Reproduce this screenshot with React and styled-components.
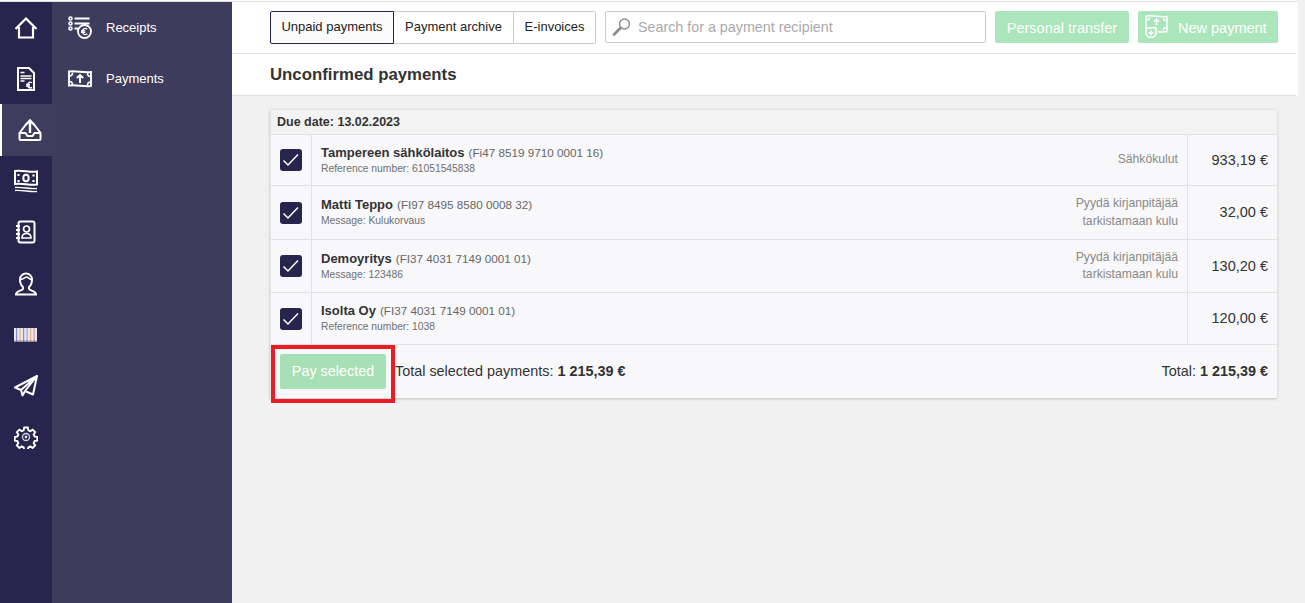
import React from 'react';
import styled, { createGlobalStyle } from 'styled-components';

const Global = createGlobalStyle`
  html, body {
    margin: 0;
    padding: 0;
    height: 100%;
    background: #f1f1f1;
    font-family: "Liberation Sans", Arial, sans-serif;
    color: #333;
  }
  #root {
    height: 100%;
  }
  * {
    box-sizing: border-box;
  }
`;

const HomeIcon = () => (
  <svg width="24" height="24" viewBox="0 0 24 24" fill="none" stroke="#fff" strokeWidth="2.2">
    <path d="M1.5 13 12 2.500 22.500 13M5 11v10.500h14V11" />
  </svg>
);

const InvoiceIcon = () => (
  <svg width="24" height="26" viewBox="0 0 24 26" fill="none" stroke="#fff" strokeWidth="2">
    <path d="M4 2h11l5 5v17H4z" />
    <path d="M6.500 6.500h4M6.500 10h11M6.500 12.500h11M6.500 15h4" strokeWidth="1.300" />
    <path d="M18 16.800a2.800 2.800 0 1 0 0 4.600M12 18.400h4M12 20h4" strokeWidth="1.300" />
  </svg>
);

const OutboxIcon = () => (
  <svg width="24" height="24" viewBox="0 0 24 24" fill="none" stroke="#fff" strokeWidth="2">
    <path d="M7.500 7 1.500 15v6a1 1 0 0 0 1 1h19a1 1 0 0 0 1-1v-6l-6-8" />
    <path d="M1.500 15h6l2 3h5l2-3h6" />
    <path d="M12 15V2.500M7.500 7 12 2.500 16.500 7" strokeWidth="2.400" />
  </svg>
);

const MoneyIcon = () => (
  <svg width="24" height="24" viewBox="0 0 24 24" fill="none" stroke="#fff" strokeWidth="2">
    <path d="M1 2c7.500-1.500 14.500 2 22 .5v13c-7.500 1.500-14.500-2-22-.5z" />
    <ellipse cx="12" cy="9" rx="2.700" ry="3.300" />
    <path d="M4.500 5v2M4.500 11v2M19.500 5.500v2M19.500 11v2" strokeWidth="2.200" />
    <path d="M1 18.500c7.500-.5 15 1.500 22 1M1 21.500c7.500-.5 15 1.500 22 1" strokeWidth="1.300" />
  </svg>
);

const ContactsIcon = () => (
  <svg width="20" height="24" viewBox="0 0 20 24" fill="none" stroke="#fff" strokeWidth="2">
    <rect x="2.500" y="1.500" width="16" height="21" rx="2" />
    <path d="M0 6h4M0 10h4M0 14h4M0 18h4" strokeWidth="1.800" />
    <circle cx="10.500" cy="9" r="3" strokeWidth="1.700" />
    <path d="M6 18c0-3 1.800-4.500 4.500-4.500S15 15 15 18z" strokeWidth="1.700" />
  </svg>
);

const PersonIcon = () => (
  <svg width="22" height="24" viewBox="0 0 22 24" fill="none" stroke="#fff" strokeWidth="2">
    <path d="M5 7.500a6 6 0 0 1 12 0c0 3-1.200 6-3 7.500v2c0 1.500 7 1.500 7 5.500H1c0-4 7-4 7-5.500v-2c-1.800-1.500-3-4.500-3-7.500z" />
    <path d="M5.200 7.500c3 .5 4.800-2.500 6.300-2.500 1.500 0 3 2.500 5.300 2.500" strokeWidth="1.500" />
  </svg>
);

const BarcodeIcon = () => (
  <svg width="23" height="14" viewBox="0 0 23 14">
    <rect width="23" height="14" fill="#e8e6f2" />
    {[2, 5.500, 9, 12.500, 16, 19.500].map((x, i) => (
      <rect
        key={x}
        x={x}
        width="1.200"
        height="14"
        fill={['#8d89c9', '#e3b779', '#8d89c9', '#b49be0', '#e3b779', '#d99a9a'][i]}
      />
    ))}
    <rect y="12.500" width="23" height="1.500" fill="#27244e" opacity="0.4" />
  </svg>
);

const PlaneIcon = () => (
  <svg width="24" height="22" viewBox="0 0 24 22" fill="none" stroke="#fff" strokeWidth="2" strokeLinejoin="round">
    <path d="M23 1 1 12.500l6 2.500L23 1zM23 1l-4 18.500-8-3.500M7 15l1.500 5.500 2.500-4.500L23 1" />
  </svg>
);

const GearIcon = () => (
  <svg width="24" height="24" viewBox="0 0 24 24" fill="none" stroke="#fff" strokeWidth="2.100">
    <path d="M10 1.500h4l.6 3 2.200 1 2.600-1.700 2.800 2.800-1.700 2.600 1 2.200 3 .6v4l-3 .6-1 2.200 1.700 2.600-2.800 2.800-2.600-1.700-2.200 1-.6 3h-4l-.6-3-2.200-1-2.600 1.700-2.800-2.800 1.700-2.600-1-2.200-3-.6v-4l3-.6 1-2.200L1.800 6.600l2.800-2.800 2.600 1.700 2.200-1z" transform="translate(1.200 1.200) scale(.9)" />
    <circle cx="12" cy="12" r="3.500" strokeWidth="1.300" stroke="#d8d6e8" />
    <circle cx="12" cy="12" r="1.400" fill="#d8d6e8" stroke="none" />
  </svg>
);

const ReceiptsIcon = () => (
  <svg width="24" height="23" viewBox="0 0 24 23" fill="none" stroke="#fff" strokeWidth="1.600">
    <circle cx="2.500" cy="2.500" r="1.500" />
    <circle cx="2.500" cy="7.500" r="1.500" />
    <circle cx="2.500" cy="12.500" r="1.500" />
    <path d="M6.500 2.500h15M6.500 7.500h15M6.500 12.500h4" strokeWidth="2" />
    <circle cx="16.500" cy="15.500" r="6.500" strokeWidth="1.800" />
    <path d="M19.300 13.200a3 3 0 1 0 0 4.600M13 14.800h4.300M13 16.400h4.300" strokeWidth="1.300" />
  </svg>
);

const PaymentsIcon = () => (
  <svg width="24" height="18" viewBox="0 0 24 18" fill="none" stroke="#fff" strokeWidth="1.900">
    <path d="M1 1.500c7-1 15 1.500 22 .5v14c-7 1-15-1.500-22-.5z" />
    <path d="M12 13V5M8.800 8 12 5l3.200 3" strokeWidth="2" />
    <path d="M1.500 6c2 0 3-1.500 3-3.500M22.500 6.500c-2 0-3-1.500-3-3.500M1.500 11.500c2 0 3 1.500 3 3.500M22.500 12c-2 0-3 1.500-3 3.500" strokeWidth="1.600" />
  </svg>
);

const SearchIcon = () => (
  <svg width="20" height="20" viewBox="0 0 20 20" fill="none" stroke="#8b8b8b">
    <circle cx="12.500" cy="7" r="5" strokeWidth="1.400" />
    <path d="M8.500 11 2 17.500" strokeWidth="2.600" strokeLinecap="round" />
  </svg>
);

const NewPaymentIcon = () => (
  <svg width="23" height="23" viewBox="0 0 23 23" fill="none" stroke="#fff" strokeWidth="1.500">
    <path d="M1 1c7-1 14 1.500 21 .5v15c-3 .5-6 .5-9 .2" />
    <path d="M1 1v12" />
    <path d="M11.500 10V4M9 6.500 11.500 4 14 6.500M2 5c1.500 0 2.500-1 2.500-2.500M21 5.500c-1.500 0-2.500-1-2.500-2.500M21 12.500c-1.500 0-2.500 1-2.500 2.500" />
    <path d="M1 13h5c2 0 4-1 5 0v5a5 4.500 0 0 1-10 0z" strokeWidth="1.600" />
    <path d="M6 15.500v5M3.500 18h5" strokeWidth="1.800" />
  </svg>
);

const CheckIcon = () => (
  <svg width="22" height="22" viewBox="0 0 22 22" fill="none" stroke="#fff" strokeWidth="1.500">
    <path d="m3.500 11.500 4.500 4.500L18 5.500" />
  </svg>
);

const railItems = [
  { id: 'home', icon: <HomeIcon /> },
  { id: 'invoice', icon: <InvoiceIcon /> },
  { id: 'outbox', icon: <OutboxIcon />, active: true },
  { id: 'money', icon: <MoneyIcon /> },
  { id: 'contacts', icon: <ContactsIcon /> },
  { id: 'person', icon: <PersonIcon /> },
  { id: 'barcode', icon: <BarcodeIcon /> },
  { id: 'plane', icon: <PlaneIcon /> },
  { id: 'gear', icon: <GearIcon /> },
];

const payments = [
  {
    name: 'Tampereen sähkölaitos',
    iban: '(Fi47 8519 9710 0001 16)',
    detail: 'Reference number: 61051545838',
    note: ['Sähkökulut'],
    amount: '933,19 €',
    height: 51,
  },
  {
    name: 'Matti Teppo',
    iban: '(FI97 8495 8580 0008 32)',
    detail: 'Message: Kulukorvaus',
    note: ['Pyydä kirjanpitäjää', 'tarkistamaan kulu'],
    amount: '32,00 €',
    height: 54,
  },
  {
    name: 'Demoyritys',
    iban: '(FI37 4031 7149 0001 01)',
    detail: 'Message: 123486',
    note: ['Pyydä kirjanpitäjää', 'tarkistamaan kulu'],
    amount: '130,20 €',
    height: 53,
  },
  {
    name: 'Isolta Oy',
    iban: '(FI37 4031 7149 0001 01)',
    detail: 'Reference number: 1038',
    note: [],
    amount: '120,00 €',
    height: 52,
  },
];

const App = () => (
  <>
    <Global />
    <TopLine />
    <Page>
      <Rail>
        {railItems.map((item) => (
          <RailItem key={item.id} $active={item.active}>
            {item.icon}
          </RailItem>
        ))}
      </Rail>

      <SubNav>
        <SubNavItem>
          <SubNavIcon>
            <ReceiptsIcon />
          </SubNavIcon>
          Receipts
        </SubNavItem>
        <SubNavItem>
          <SubNavIcon>
            <PaymentsIcon />
          </SubNavIcon>
          Payments
        </SubNavItem>
      </SubNav>

      <Main>
        <HeaderShell>
          <Toolbar>
            <Tabs>
              <Tab $active $width={124}>Unpaid payments</Tab>
              <Tab $width={120}>Payment archive</Tab>
              <Tab $width={82}>E-invoices</Tab>
            </Tabs>
            <Search>
              <SearchIcon />
              <SearchText>Search for a payment recipient</SearchText>
            </Search>
            <GreenButton $width={134}>Personal transfer</GreenButton>
            <NewPaymentButton>
              <NewPaymentIcon />
              New payment
            </NewPaymentButton>
          </Toolbar>
          <TitleBar>
            <Title>Unconfirmed payments</Title>
          </TitleBar>
        </HeaderShell>

        <Content>
          <Card>
            <DueDate>Due date: 13.02.2023</DueDate>
            {payments.map((p) => (
              <Row key={p.name} $height={p.height}>
                <CheckCell>
                  <CheckBox>
                    <CheckIcon />
                  </CheckBox>
                </CheckCell>
                <InfoCell>
                  <div>
                    <Name>{p.name}</Name>
                    <Iban>{p.iban}</Iban>
                  </div>
                  <Detail>{p.detail}</Detail>
                </InfoCell>
                <Note>
                  {p.note.map((line) => (
                    <div key={line}>{line}</div>
                  ))}
                </Note>
                <Amount>{p.amount}</Amount>
              </Row>
            ))}
            <Footer>
              <PayButton>Pay selected</PayButton>
              <FooterText>
                Total selected payments: <b>1 215,39 €</b>
              </FooterText>
              <FooterTotal>
                Total: <b>1 215,39 €</b>
              </FooterTotal>
              <Highlight />
            </Footer>
          </Card>
        </Content>
      </Main>
    </Page>
  </>
);

export default App;

const TopLine = styled.div`
  height: 2px;
  width: 1296px;
  background: #fff;
  border-bottom: 1px solid #ddd;
`;

const Page = styled.div`
  display: flex;
  height: 601px;
  overflow: hidden;
`;

const Rail = styled.nav`
  width: 52px;
  flex: none;
  background: #27244e;
  display: flex;
  flex-direction: column;
`;

const RailItem = styled.div`
  height: 51.2px;
  flex: none;
  display: flex;
  align-items: center;
  justify-content: center;
  padding: ${({ $active }) => ($active ? '0 0 0 5px' : '0 3px 0 0')};
  background: ${({ $active }) => ($active ? '#3f3d5e' : 'transparent')};
  border-left: 2px solid ${({ $active }) => ($active ? '#fff' : 'transparent')};
`;

const SubNav = styled.nav`
  width: 180px;
  flex: none;
  background: #3e3c5c;
  display: flex;
  flex-direction: column;
`;

const SubNavItem = styled.div`
  height: 51.3px;
  display: flex;
  align-items: center;
  color: #fff;
  font-size: 13px;
  padding-left: 16px;
`;

const SubNavIcon = styled.span`
  width: 38px;
  display: flex;
  align-items: center;
`;

const Main = styled.main`
  flex: 1;
  min-width: 0;
`;

const HeaderShell = styled.header`
  background: #fff;
  margin-right: 7px;
`;

const Toolbar = styled.div`
  height: 52px;
  margin-right: 2px;
  padding: 9px 0 0 38px;
  display: flex;
  align-items: flex-start;
  gap: 9px;
  border-bottom: 1px solid #ddd;
`;

const Tabs = styled.div`
  display: flex;
  height: 33px;
`;

const Tab = styled.div`
  width: ${({ $width }) => $width}px;
  display: flex;
  align-items: center;
  justify-content: center;
  padding-bottom: 2px;
  font-size: 13px;
  color: #222;
  background: ${({ $active }) => ($active ? '#fafafa' : '#fff')};
  border: 1px solid ${({ $active }) => ($active ? '#27244e' : '#ccc')};
  border-left-width: ${({ $active }) => ($active ? 1 : 0)}px;
  border-radius: ${({ $active }) => ($active ? '2px 0 0 2px' : 0)};

  &:last-child {
    border-radius: 0 2px 2px 0;
  }
`;

const Search = styled.div`
  width: 381px;
  height: 32px;
  display: flex;
  align-items: center;
  gap: 6px;
  padding-left: 6px;
  border: 1px solid #ccc;
  border-radius: 2px;
`;

const SearchText = styled.span`
  font-size: 14.3px;
  color: #aaa;
`;

const GreenButton = styled.div`
  width: ${({ $width }) => $width}px;
  height: 32px;
  display: flex;
  align-items: center;
  justify-content: center;
  padding-top: 2px;
  color: #fff;
  background: #abe5bb;
  border-radius: 2px;
  font-size: 14.5px;
`;

const NewPaymentButton = styled(GreenButton).attrs({ $width: 140 })`
  justify-content: flex-start;
  gap: 10px;
  padding-left: 7px;

  svg {
    margin-top: -3px;
  }
`;

const TitleBar = styled.div`
  height: 42px;
  margin-right: 2px;
  padding-left: 38px;
  display: flex;
  align-items: center;
  border-bottom: 1px solid #ddd;
`;

const Title = styled.h1`
  margin: 0;
  font-size: 16.8px;
  font-weight: 700;
  color: #333;
`;

const Content = styled.div`
  padding: 13px 28px 0 38px;
`;

const Card = styled.section`
  background: #f8f8fa;
  border: 1px solid #e2e2e2;
  border-width: 1px 0 0 1px;
  border-radius: 2px 2px 0 0;
  box-shadow: 0 1px 3px rgba(0, 0, 0, 0.2);
`;

const DueDate = styled.div`
  height: 25px;
  display: flex;
  align-items: center;
  padding-left: 6px;
  font-size: 12.5px;
  font-weight: 700;
  background: #f3f3f3;
  border-bottom: 1px solid #e2e2e2;
`;

const Row = styled.div`
  height: ${({ $height }) => $height}px;
  display: flex;
  border-bottom: 1px solid #e2e2e2;
`;

const CheckCell = styled.div`
  width: 41px;
  flex: none;
  padding-right: 1px;
  display: flex;
  align-items: center;
  justify-content: center;
  border-right: 1px solid #e2e2e2;
`;

const CheckBox = styled.div`
  width: 22px;
  height: 22px;
  background: #27244e;
  border-radius: 3px;
`;

const InfoCell = styled.div`
  flex: 1;
  padding: 0 0 4px 9px;
  display: flex;
  flex-direction: column;
  justify-content: center;
  gap: 2px;
`;

const Name = styled.span`
  font-size: 13px;
  font-weight: 700;
  color: #333;
  margin-right: 4px;
`;

const Iban = styled.span`
  font-size: 11.7px;
  color: #666;
`;

const Detail = styled.div`
  font-size: 10.3px;
  color: #6f6f6f;
`;

const Note = styled.div`
  padding-right: 9px;
  align-self: center;
  text-align: right;
  font-size: 12.2px;
  line-height: 17.5px;
  color: #888;
`;

const Amount = styled.div`
  width: 90px;
  flex: none;
  display: flex;
  align-items: center;
  justify-content: flex-end;
  padding: 0 9px 1px 0;
  font-size: 14.5px;
  color: #333;
  border-left: 1px solid #e2e2e2;
`;

const Footer = styled.div`
  position: relative;
  height: 53px;
  display: flex;
  align-items: center;
  padding: 0 9px 1px 9px;
`;

const PayButton = styled.div`
  width: 106px;
  height: 35px;
  display: flex;
  align-items: center;
  justify-content: center;
  color: #fff;
  background: #a8e0b5;
  border-radius: 2px;
  font-size: 14.4px;
  margin-right: 9px;
`;

const FooterText = styled.div`
  font-size: 14.4px;
  color: #333;
`;

const FooterTotal = styled(FooterText)`
  margin-left: auto;
`;

const Highlight = styled.div`
  position: absolute;
  left: 0;
  top: 0;
  width: 124px;
  height: 58px;
  border: 4px solid #ed1c24;
  pointer-events: none;
`;
